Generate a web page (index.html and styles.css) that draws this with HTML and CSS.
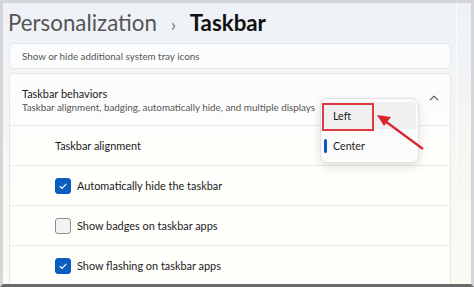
FILE: index.html
```html
<!DOCTYPE html>
<html lang="en">
<head>
  <meta charset="UTF-8" />
  <title>Personalization &gt; Taskbar</title>
  <link rel="stylesheet" href="styles.css">
</head>
<body>
  <div class="frame">
    <div class="page">
      <h1 class="title"><span class="crumb">Personalization</span><span class="sep">&#8250;</span><span class="current">Taskbar</span></h1>

      <div class="card short">
        <div class="desc">Show or hide additional system tray icons</div>
      </div>

      <div class="card group">
        <div class="group-head">
          <div>
            <div class="head-title">Taskbar behaviors</div>
            <div class="desc">Taskbar alignment, badging, automatically hide, and multiple displays</div>
          </div>
          <svg class="chev" width="10" height="6" viewBox="0 0 10 6"><path d="M1 5.2 L5 1.2 L9 5.2" fill="none" stroke="#444" stroke-width="1.1"/></svg>
        </div>
        <div class="row"><span class="label">Taskbar alignment</span></div>
        <div class="row"><span class="box on"><svg viewBox="0 0 16 16"><path d="M4.3 8.3 L6.9 10.8 L11.8 5.6" fill="none" stroke="#fff" stroke-width="1.3"/></svg></span><span class="label">Automatically hide the taskbar</span></div>
        <div class="row"><span class="box"></span><span class="label">Show badges on taskbar apps</span></div>
        <div class="row"><span class="box on"><svg viewBox="0 0 16 16"><path d="M4.3 8.3 L6.9 10.8 L11.8 5.6" fill="none" stroke="#fff" stroke-width="1.3"/></svg></span><span class="label">Show flashing on taskbar apps</span></div>
      </div>

      <div class="menu">
        <div class="item hover"><span class="mark"></span>Left</div>
        <div class="item"><span class="mark sel"></span>Center</div>
      </div>
      <div class="callout"></div>
      <svg class="arrow" width="474" height="287" viewBox="0 0 474 287">
        <line x1="423" y1="149" x2="385" y2="121" stroke="#d8262d" stroke-width="2.2"/>
        <polygon points="377,115 391,117 384,126" fill="#d8262d"/>
      </svg>
    </div>
  </div>
</body>
</html>
```

FILE: styles.css
```css
html, body {
  margin: 0;
  height: 100%;
}
body {
  font-family: Lato, 'Open Sans', sans-serif;
  color: #1b1b1b;
}
.frame {
  box-sizing: border-box;
  width: 474px;
  height: 287px;
  border: 3px solid #d3d5d8;
  border-bottom: 3px solid #6a6a6a;
  overflow: hidden;
  background: linear-gradient(180deg, #eef2f8 0%, #f5f6f3 45%, #fbfbf2 100%);
}
.page {
  position: relative;
  height: 100%;
  padding: 0 5px 0 6px;
  border-right: 1px solid #fafcfc;
  margin-right: 14px;
  box-sizing: border-box;
}
.title {
  margin: 0;
  height: 40px;
  padding-top: 3px;
  box-sizing: border-box;
  font-size: 22.3px;
  font-weight: 400;
  line-height: 34px;
  display: flex;
  align-items: baseline;
  white-space: nowrap;
  margin-left: -1px;
}
.crumb {
  color: #555;
}
.sep {
  color: #666;
  font-size: 17px;
  margin: 0 14px 0 14px;
}
.current {
  color: #111;
  font-weight: 700;
}
.card {
  background: rgba(255, 255, 255, 0.72);
  border: 1px solid #e4e6e8;
  border-radius: 4px;
}
.short {
  height: 24px;
  display: flex;
  align-items: center;
  padding-left: 12px;
  margin-bottom: 4px;
}
.desc {
  font-size: 9.8px;
  color: #555;
  white-space: nowrap;
}
.group-head {
  height: 51px;
  padding: 0 11px 0 12px;
  display: flex;
  align-items: center;
  justify-content: space-between;
  border-bottom: 1px solid #e8e8e6;
}
.head-title {
  font-size: 10.9px;
  color: #1b1b1b;
  line-height: 15px;
}
.group-head .desc {
  line-height: 13px;
}
.chev {
  margin-top: -4px;
}
.row {
  height: 39px;
  display: flex;
  align-items: center;
  padding-left: 45px;
  border-bottom: 1px solid #ecebe6;
  background: rgba(255, 255, 250, 0.4);
}
.label {
  font-size: 10.9px;
  color: #1b1b1b;
}
.box {
  box-sizing: border-box;
  width: 16px;
  height: 16px;
  border-radius: 3px;
  border: 1px solid #8d8d8d;
  background: #f3f3f3;
  margin-right: 6px;
  display: flex;
}
.box.on {
  background: #0a5cbf;
  border-color: #0a5cbf;
}
.box svg {
  width: 14px;
  height: 14px;
}
.menu {
  position: absolute;
  left: 317px;
  top: 95px;
  width: 99px;
  height: 65px;
  box-sizing: border-box;
  background: #fbfbfb;
  border: 1px solid #e2e2e2;
  border-radius: 7px;
  box-shadow: 0 4px 10px rgba(0, 0, 0, 0.12);
  padding: 3px 2px;
}
.item {
  height: 27px;
  display: flex;
  align-items: center;
  font-size: 10.7px;
  color: #1b1b1b;
  border-radius: 4px;
  margin-bottom: 3px;
}
.item.hover {
  background: #f0f0f0;
}
.mark {
  width: 3px;
  height: 14px;
  margin: 0 6px 0 1px;
  border-radius: 2px;
}
.mark.sel {
  background: #0a5cbf;
}
.callout {
  position: absolute;
  left: 319px;
  top: 100px;
  width: 52px;
  height: 28px;
  box-sizing: border-box;
  border: 2px solid #dc3a3f;
}
.arrow {
  position: absolute;
  left: -3px;
  top: -3px;
  pointer-events: none;
}
```
